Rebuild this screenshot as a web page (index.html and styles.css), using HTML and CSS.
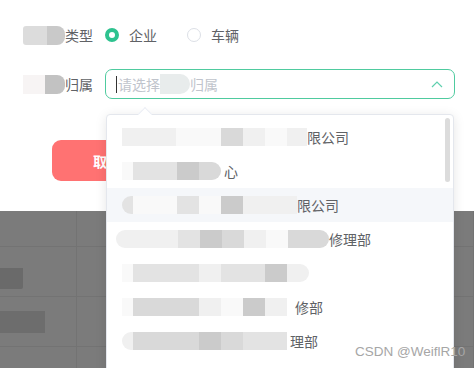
FILE: index.html
```html
<!DOCTYPE html>
<html lang="zh">
<head>
<meta charset="utf-8">
<link rel="stylesheet" href="styles.css">
</head>
<body>
<div class="page">
  <div class="dialog">
    <div class="form-row">
      <div class="label"><span class="mask mask-a"></span>类型</div>
      <div class="radios">
        <label class="radio"><span class="dot checked"></span>企业</label>
        <label class="radio"><span class="dot"></span>车辆</label>
      </div>
    </div>
    <div class="form-row row2">
      <div class="label"><span class="mask mask-b"></span>归属</div>
      <div class="select">
        <span class="caret"></span>
        <span class="ph">请选择<span class="ph-mask"></span>归属</span>
        <svg class="chev" width="12" height="8" viewBox="0 0 12 8"><polyline points="1,7 6,2 11,7" fill="none" stroke="#5fd0ae" stroke-width="1.2"/></svg>
      </div>
    </div>
    <div class="actions">
      <button class="btn-cancel">取消</button>
    </div>
  </div>
  <div class="backdrop">
    <div class="trow"><div class="tc c1"></div><div class="tc"></div></div>
    <div class="trow"><div class="tc c1"><span class="dk dk1"></span></div><div class="tc"></div></div>
    <div class="trow"><div class="tc c1"><span class="dk dk2"></span></div><div class="tc"></div></div>
    <div class="trow"><div class="tc c1"></div><div class="tc"></div></div>
  </div>

  <div class="dropdown">
    <span class="arrow"></span>
    <div class="scroll"></div>
    <ul class="options">
      <li class="opt">
        <span class="bl w54 s1"></span><span class="bl w45 s0"></span><span class="bl w22 s3"></span><span class="bl w22 s1"></span><span class="bl w22 s0"></span><span class="bl w20 s1"></span><span class="tx">限公司</span>
      </li>
      <li class="opt">
        <span class="bl w11 s0"></span><span class="bl w22 s2"></span><span class="bl w22 s2"></span><span class="bl w22 s4"></span><span class="bl w22 s3 rr"></span><span class="tx gap3">心</span>
      </li>
      <li class="opt hover">
        <span class="bl w11 s2 rl"></span><span class="bl w44 s0"></span><span class="bl w22 s2"></span><span class="bl w22 s0"></span><span class="bl w22 s4"></span><span class="bl w44 s1"></span><span class="bl w10 s1"></span><span class="tx">限公司</span>
      </li>
      <li class="opt o4">
        <span class="bl w62 s1 rl"></span><span class="bl w22 s2"></span><span class="bl w22 s4"></span><span class="bl w22 s3"></span><span class="bl w22 s1"></span><span class="bl w22 s0"></span><span class="bl w23 s3"></span><span class="bl w18 s3 rr"></span><span class="tx">修理部</span>
      </li>
      <li class="opt">
        <span class="bl w11 s0"></span><span class="bl w66 s2"></span><span class="bl w22 s1"></span><span class="bl w22 s2"></span><span class="bl w22 s2"></span><span class="bl w22 s4"></span><span class="bl w22 s1 rr"></span>
      </li>
      <li class="opt">
        <span class="bl w11 s0"></span><span class="bl w66 s3"></span><span class="bl w22 s1"></span><span class="bl w22 s0"></span><span class="bl w22 s4"></span><span class="bl w22 s1"></span><span class="tx gap8">修部</span>
      </li>
      <li class="opt">
        <span class="bl w11 s1 rl"></span><span class="bl w66 s3"></span><span class="bl w22 s4"></span><span class="bl w22 s3"></span><span class="bl w44 s2"></span><span class="tx gap3">理部</span>
      </li>
    </ul>
  </div>

  <div class="watermark">CSDN @WeiflR10</div>
</div>
</body>
</html>
```
FILE: styles.css
```css
* { box-sizing: border-box; }
html, body { margin: 0; padding: 0; }
body {
  width: 474px;
  height: 368px;
  overflow: hidden;
  font-family: "Noto Sans CJK SC", "Noto Sans", sans-serif;
  font-size: 14px;
  color: #606266;
  background: #fff;
}
.page {
  position: relative;
  width: 474px;
  height: 368px;
  overflow: hidden;
}
.dialog {
  height: 211px;
  background: #fff;
  padding-top: 20px;
}
.form-row {
  display: flex;
  align-items: center;
  height: 30px;
}
.row2 { margin-top: 19px; }
.label {
  width: 105px;
  padding-right: 12px;
  display: flex;
  justify-content: flex-end;
  align-items: center;
  color: #606266;
  font-size: 14px;
  line-height: 30px;
}
.mask {
  display: inline-block;
  height: 19px;
  border-radius: 0 8px 8px 0;
}
.mask-a {
  width: 42px;
  background: linear-gradient(90deg, #dcdcdc 0 24px, #c9c9c9 24px);
  border-radius: 3px 8px 8px 3px;
}
.mask-b {
  width: 42px;
  background: linear-gradient(90deg, #f7f4f4 0 22px, #c2c2c2 22px);
}
.radios { display: flex; align-items: center; }
.radio {
  display: flex;
  align-items: center;
  margin-right: 30px;
  color: #606266;
}
.dot {
  width: 14px;
  height: 14px;
  border-radius: 50%;
  border: 1px solid #dcdfe6;
  background: #fff;
  margin-right: 10px;
  display: inline-block;
}
.dot.checked {
  border: 4px solid #2ec28f;
}
.select {
  position: relative;
  width: 350px;
  height: 30px;
  border: 1px solid #4fcb9f;
  border-radius: 7px;
  display: flex;
  align-items: center;
  padding-left: 10px;
}
.caret {
  width: 1px;
  height: 17px;
  background: #333;
  margin-right: 1px;
}
.ph { color: #c0c4cc; display: flex; align-items: center; }
.ph-mask {
  display: inline-block;
  width: 30px;
  height: 20px;
  background: #e8ecec;
  border-radius: 0 10px 10px 0;
  margin-right: 0;
}
.chev { position: absolute; right: 11px; top: 10px; }
.actions { margin-top: 41px; padding-left: 52px; }
.btn-cancel {
  width: 110px;
  height: 41px;
  border: none;
  border-radius: 9px;
  background: #ff7272;
  color: #fff;
  font-family: "Liberation Serif", "Noto Sans CJK SC", serif;
  font-size: 14px;
  font-weight: bold;
}
.backdrop {
  height: 157px;
  background: #7b7b7b;
  display: flex;
  flex-direction: column;
}
.trow {
  display: flex;
  height: 50px;
  flex: 0 0 auto;
  border-bottom: 1px solid #737373;
}
.trow:first-child { height: 36px; }
.tc { border-right: 1px solid #737373; flex: 1; position: relative; }
.tc.c1 { flex: 0 0 77px; }
.dk { position: absolute; left: 0; background: #6a6a6a; }
.dk1 { top: 21px; width: 23px; height: 21px; border-radius: 0 0 2px 0; }
.dk2 { top: 14px; width: 45px; height: 22px; background: #6d6d6d; }

.dropdown {
  position: absolute;
  left: 106px;
  top: 114px;
  width: 348px;
  height: 270px;
  background: #fff;
  border: 1px solid #e4e7ed;
  border-radius: 4px;
  box-shadow: 0 2px 12px rgba(0,0,0,0.1);
}
.arrow {
  position: absolute;
  left: 33px;
  top: -6px;
  width: 10px;
  height: 10px;
  background: #fff;
  border-left: 1px solid #ebeef5;
  border-top: 1px solid #ebeef5;
  transform: rotate(45deg);
}
.scroll {
  position: absolute;
  right: 3px;
  top: 3px;
  width: 5px;
  height: 64px;
  border-radius: 3px;
  background: #dcdcdc;
}
.options {
  list-style: none;
  margin: 0;
  padding: 5px 0 0;
}
.opt {
  height: 34px;
  display: flex;
  align-items: center;
  padding-left: 15px;
  color: #606266;
  font-size: 14px;
}
.opt.hover { background: #f5f7fa; }
.opt.o4 { padding-left: 9px; }
.bl { display: inline-block; height: 18px; }
.rl { border-radius: 9px 0 0 9px; }
.rr { border-radius: 0 9px 9px 0; }
.s0 { background: #f9f9f9; }
.s1 { background: #f0f0f0; }
.s2 { background: #e3e3e3; }
.s3 { background: #d9d9d9; }
.s4 { background: #cbcbcb; }
.w10 { width: 10px; }
.w11 { width: 11px; }
.w18 { width: 18px; }
.w20 { width: 20px; }
.w22 { width: 22px; }
.w23 { width: 23px; }
.w44 { width: 44px; }
.w45 { width: 45px; }
.w54 { width: 54px; }
.w62 { width: 62px; }
.w66 { width: 66px; }
.tx { white-space: nowrap; }
.gap3 { margin-left: 3px; }
.gap8 { margin-left: 8px; }

.watermark {
  position: absolute;
  left: 355px;
  top: 344px;
  white-space: nowrap;
  font-family: "Liberation Sans", Arial, sans-serif;
  font-size: 13.5px;
  color: #a6a6a6;
}
```
